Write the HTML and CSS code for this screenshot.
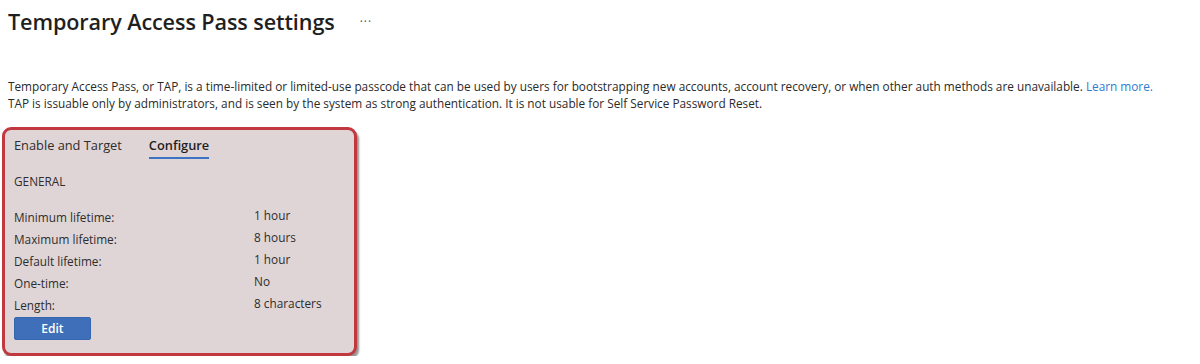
FILE: index.html
```html
<!DOCTYPE html>
<html>
<head>
<meta charset="utf-8">
<link rel="stylesheet" href="styles.css">
</head>
<body>
<div class="page">
  <header class="head">
    <h1 class="title">Temporary Access Pass settings</h1>
    <span class="more">···</span>
  </header>
  <p class="desc">Temporary Access Pass, or TAP, is a time-limited or limited-use passcode that can be used by users for bootstrapping new accounts, account recovery, or when other auth methods are unavailable. <a class="link" href="#">Learn more.</a><br>TAP is issuable only by administrators, and is seen by the system as strong authentication. It is not usable for Self Service Password Reset.</p>
  <section class="card">
    <nav class="tabs">
      <span class="tab">Enable and Target</span>
      <span class="tab active">Configure</span>
    </nav>
    <div class="section">GENERAL</div>
    <div class="rows">
      <div class="row"><span class="label">Minimum lifetime:</span><span class="value">1 hour</span></div>
      <div class="row"><span class="label">Maximum lifetime:</span><span class="value">8 hours</span></div>
      <div class="row"><span class="label">Default lifetime:</span><span class="value">1 hour</span></div>
      <div class="row"><span class="label">One-time:</span><span class="value">No</span></div>
      <div class="row"><span class="label">Length:</span><span class="value">8 characters</span></div>
    </div>
    <button class="edit">Edit</button>
  </section>
</div>
</body>
</html>
```
FILE: styles.css
```css
html, body { margin: 0; padding: 0; background: #fff; }
body { font-family: "Open Sans", "Noto Sans", sans-serif; color: #242424; }
.page { padding: 0 0 0 8px; }
.head { display: flex; align-items: center; height: 42px; }
.title { margin: 0; font-size: 21.6px; font-weight: 600; color: #1f1f1f; letter-spacing: -0.1px; }
.more { margin-left: 25px; font-size: 12px; color: #555; letter-spacing: 1px; }
.desc { margin: 36px 0 0; font-size: 11.8px; line-height: 17px; color: #2a2a2a; }
.link { color: #2f7bd3; text-decoration: none; }
.card {
  margin: 15px 0 0 -6px;
  width: 340px;
  padding: 6px 0 13px 9px;
  background: #e0d5d6;
  border: 3px solid #c1393e;
  border-radius: 9px;
  box-shadow: 2px 3px 2px rgba(60,60,60,0.55);
}
.tabs { display: flex; gap: 27px; height: 24px; }
.tab { font-size: 12.8px; color: #2d2d2d; }
.tab.active { font-weight: 600; color: #1f1f1f; border-bottom: 2px solid #3d73c4; padding-bottom: 5px; height: 16px; }
.section { margin-top: 13px; font-size: 11.8px; color: #2d2d2d; }
.rows { margin-top: 18px; }
.row { display: flex; height: 22px; font-size: 11.8px; color: #2d2d2d; }
.label { width: 240px; padding-top: 2px; }
.edit {
  display: block; margin-top: 0;
  width: 77px; height: 23px; border: 1px solid #3667ae; border-radius: 2px;
  background: #3f6fb8; color: #fff; font-family: inherit; font-size: 12px; font-weight: 600;
  padding: 0;
}
```
